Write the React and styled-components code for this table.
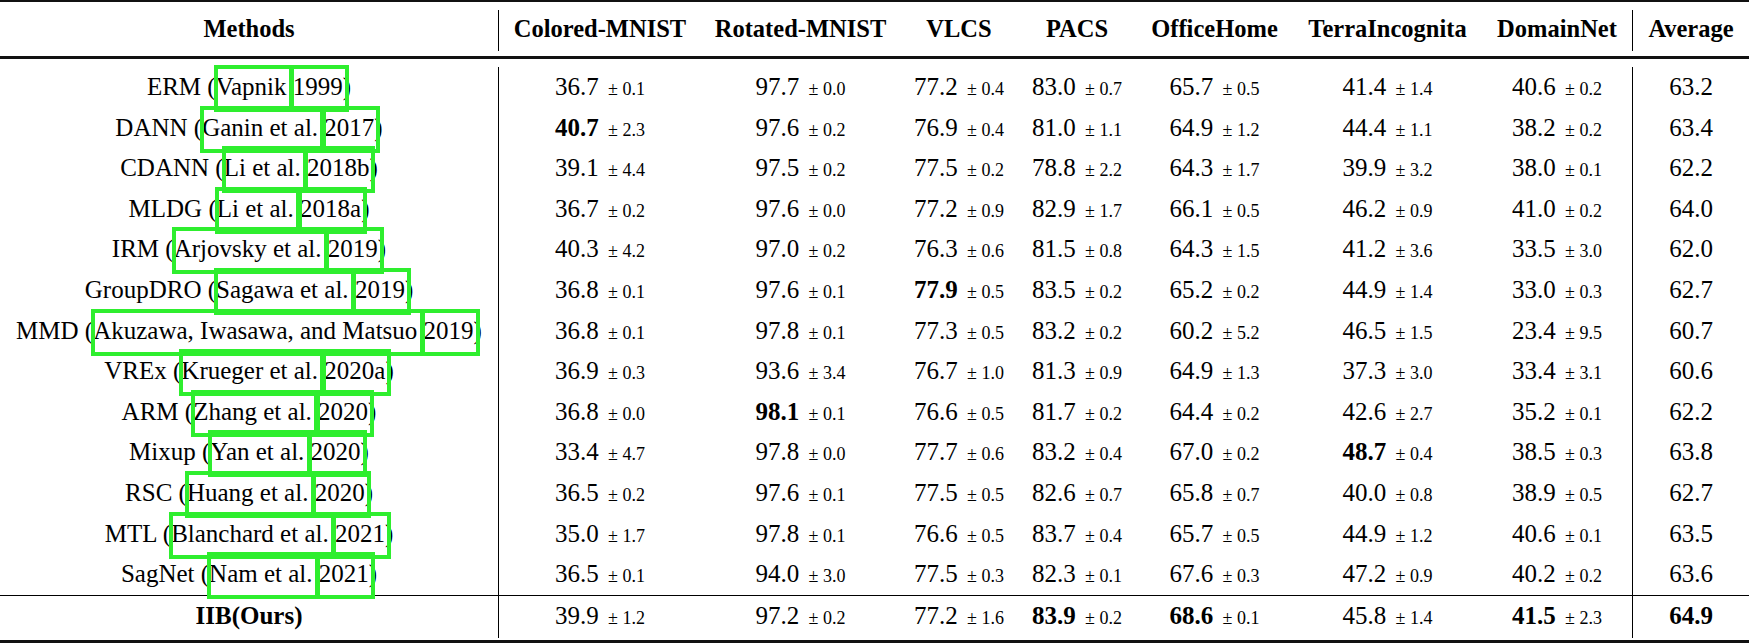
import React from 'react';
import styled, { createGlobalStyle } from 'styled-components';

const GlobalStyle = createGlobalStyle`
  html, body { margin: 0; padding: 0; background: #ffffff; }
  body {
    font-family: "Liberation Serif", "Times New Roman", serif;
    color: #000;
  }
`;

const COLS = '498px 203px 199px 118px 118px 157px 189px 150px 117px';

const Table = styled.div`
  width: 1749px;
  display: flex;
  flex-direction: column;
`;

const Rule = styled.div`
  height: ${(p) => p.$h}px;
  background: #111;
`;

const HeaderRow = styled.div`
  display: grid;
  grid-template-columns: ${COLS};
  padding: 8px 0 5px;
`;

const HeadCell = styled.div`
  box-sizing: border-box;
  height: 41px;
  font-size: 24.5px;
  font-weight: 700;
  line-height: 37px;
  text-align: center;
  white-space: nowrap;
  border-left: ${(p) => (p.$divider ? '1px solid #000' : '0')};
`;

const Body = styled.div`
  display: flex;
  flex-direction: column;
  padding-top: 8px;
`;

const Row = styled.div`
  display: grid;
  grid-template-columns: ${COLS};
  height: 40.6px;
  border-top: ${(p) => (p.$rule ? '1px solid #000' : '0')};
`;

const Cell = styled.div`
  box-sizing: border-box;
  font-size: 25px;
  line-height: 40.6px;
  text-align: center;
  white-space: nowrap;
  border-left: ${(p) => (p.$divider ? '1px solid #000' : '0')};
  font-weight: ${(p) => (p.$bold ? 700 : 400)};
`;

const Cite = styled.span`
  position: relative;
  &::after {
    content: '';
    position: absolute;
    top: -8px;
    bottom: -12px;
    left: ${(p) => (p.$year ? '-2.5px' : '-2px')};
    right: ${(p) => (p.$year ? '-6px' : '0px')};
    border: 4px solid #2eee2e;
    pointer-events: none;
  }
`;

const Value = styled.span`
  font-weight: ${(p) => (p.$bold ? 700 : 400)};
`;

const Std = styled.span`
  font-size: 18px;
  margin-left: 3px;
`;

const Spacer = styled.div`
  height: 4px;
`;

const HEADERS = [
  'Methods',
  'Colored-MNIST',
  'Rotated-MNIST',
  'VLCS',
  'PACS',
  'OfficeHome',
  'TerraIncognita',
  'DomainNet',
  'Average',
];

const DIVIDERS = [1, 8];

const ROWS = [
  ['ERM', 'Vapnik ', '1999', ['36.7', '0.1'], ['97.7', '0.0'], ['77.2', '0.4'], ['83.0', '0.7'], ['65.7', '0.5'], ['41.4', '1.4'], ['40.6', '0.2'], '63.2'],
  ['DANN', 'Ganin et al. ', '2017', ['40.7', '2.3', true], ['97.6', '0.2'], ['76.9', '0.4'], ['81.0', '1.1'], ['64.9', '1.2'], ['44.4', '1.1'], ['38.2', '0.2'], '63.4'],
  ['CDANN', 'Li et al. ', '2018b', ['39.1', '4.4'], ['97.5', '0.2'], ['77.5', '0.2'], ['78.8', '2.2'], ['64.3', '1.7'], ['39.9', '3.2'], ['38.0', '0.1'], '62.2'],
  ['MLDG', 'Li et al. ', '2018a', ['36.7', '0.2'], ['97.6', '0.0'], ['77.2', '0.9'], ['82.9', '1.7'], ['66.1', '0.5'], ['46.2', '0.9'], ['41.0', '0.2'], '64.0'],
  ['IRM', 'Arjovsky et al. ', '2019', ['40.3', '4.2'], ['97.0', '0.2'], ['76.3', '0.6'], ['81.5', '0.8'], ['64.3', '1.5'], ['41.2', '3.6'], ['33.5', '3.0'], '62.0'],
  ['GroupDRO', 'Sagawa et al. ', '2019', ['36.8', '0.1'], ['97.6', '0.1'], ['77.9', '0.5', true], ['83.5', '0.2'], ['65.2', '0.2'], ['44.9', '1.4'], ['33.0', '0.3'], '62.7'],
  ['MMD', 'Akuzawa, Iwasawa, and Matsuo ', '2019', ['36.8', '0.1'], ['97.8', '0.1'], ['77.3', '0.5'], ['83.2', '0.2'], ['60.2', '5.2'], ['46.5', '1.5'], ['23.4', '9.5'], '60.7'],
  ['VREx', 'Krueger et al. ', '2020a', ['36.9', '0.3'], ['93.6', '3.4'], ['76.7', '1.0'], ['81.3', '0.9'], ['64.9', '1.3'], ['37.3', '3.0'], ['33.4', '3.1'], '60.6'],
  ['ARM', 'Zhang et al. ', '2020', ['36.8', '0.0'], ['98.1', '0.1', true], ['76.6', '0.5'], ['81.7', '0.2'], ['64.4', '0.2'], ['42.6', '2.7'], ['35.2', '0.1'], '62.2'],
  ['Mixup', 'Yan et al. ', '2020', ['33.4', '4.7'], ['97.8', '0.0'], ['77.7', '0.6'], ['83.2', '0.4'], ['67.0', '0.2'], ['48.7', '0.4', true], ['38.5', '0.3'], '63.8'],
  ['RSC', 'Huang et al. ', '2020', ['36.5', '0.2'], ['97.6', '0.1'], ['77.5', '0.5'], ['82.6', '0.7'], ['65.8', '0.7'], ['40.0', '0.8'], ['38.9', '0.5'], '62.7'],
  ['MTL', 'Blanchard et al. ', '2021', ['35.0', '1.7'], ['97.8', '0.1'], ['76.6', '0.5'], ['83.7', '0.4'], ['65.7', '0.5'], ['44.9', '1.2'], ['40.6', '0.1'], '63.5'],
  ['SagNet', 'Nam et al. ', '2021', ['36.5', '0.1'], ['94.0', '3.0'], ['77.5', '0.3'], ['82.3', '0.1'], ['67.6', '0.3'], ['47.2', '0.9'], ['40.2', '0.2'], '63.6'],
];

const OURS = [
  ['39.9', '1.2'],
  ['97.2', '0.2'],
  ['77.2', '1.6'],
  ['83.9', '0.2', true],
  ['68.6', '0.1', true],
  ['45.8', '1.4'],
  ['41.5', '2.3', true],
];

function Score({ v }) {
  const [mean, std, bold] = v;
  return (
    <>
      <Value $bold={bold}>{mean}</Value> <Std>± {std}</Std>
    </>
  );
}

export default function App() {
  return (
    <>
      <GlobalStyle />
      <Table>
        <Rule $h={2} />
        <HeaderRow>
          {HEADERS.map((h, i) => (
            <HeadCell key={h} $divider={DIVIDERS.includes(i)}>
              {h}
            </HeadCell>
          ))}
        </HeaderRow>
        <Rule $h={3} />
        <Body>
          {ROWS.map((r) => {
            const [name, author, year, ...rest] = r;
            const scores = rest.slice(0, 7);
            const avg = rest[7];
            return (
              <Row key={name}>
                <Cell>
                  {name} (<Cite>{author}</Cite>
                  <Cite $year>{year}</Cite>)
                </Cell>
                {scores.map((s, i) => (
                  <Cell key={i} $divider={i === 0}>
                    <Score v={s} />
                  </Cell>
                ))}
                <Cell $divider>{avg}</Cell>
              </Row>
            );
          })}
          <Row $rule>
            <Cell $bold>IIB(Ours)</Cell>
            {OURS.map((s, i) => (
              <Cell key={i} $divider={i === 0}>
                <Score v={s} />
              </Cell>
            ))}
            <Cell $divider $bold>
              64.9
            </Cell>
          </Row>
        </Body>
        <Spacer />
        <Rule $h={3} />
      </Table>
    </>
  );
}
